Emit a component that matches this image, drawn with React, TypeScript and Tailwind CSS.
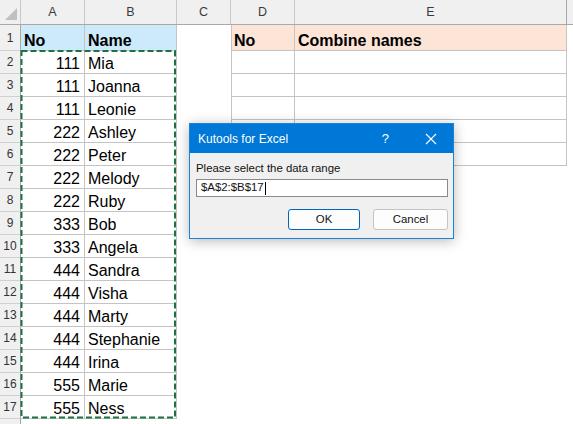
import React from "react";

const names: [number, string][] = [
  [111, "Mia"],
  [111, "Joanna"],
  [111, "Leonie"],
  [222, "Ashley"],
  [222, "Peter"],
  [222, "Melody"],
  [222, "Ruby"],
  [333, "Bob"],
  [333, "Angela"],
  [444, "Sandra"],
  [444, "Visha"],
  [444, "Marty"],
  [444, "Stephanie"],
  [444, "Irina"],
  [555, "Marie"],
  [555, "Ness"],
];

const cellFont = { fontFamily: '"Liberation Sans", Arial, sans-serif' };

function ColHead({ label, w }: { label: string; w: string }) {
  return (
    <div className={`${w} shrink-0 h-full flex items-center justify-center border-r border-[#c8c8c8] text-[12.5px] text-[#3a3a3a]`}>
      {label}
    </div>
  );
}

function RowNum({ n, h }: { n: number; h: string }) {
  return (
    <div className={`w-[21px] shrink-0 ${h} flex items-center justify-center bg-[#f0f0f0] border-r border-b border-r-[#a8a8a8] border-b-[#d0d0d0] text-[12px] text-[#333]`}>
      {n}
    </div>
  );
}

function Dialog() {
  return (
    <div className="absolute left-[189px] top-[123px] w-[265px] h-[116px] bg-[#f0f0f0] border border-[#1883d7] shadow-[0_2px_12px_rgba(0,0,0,0.28)] flex flex-col">
      <div className="h-[29px] bg-[#0078d7] flex items-center text-white pl-[8px] pr-[14px]">
        <span className="text-[12px] flex-1">Kutools for Excel</span>
        <span className="text-[13px] mr-[36px]">?</span>
        <svg width="12" height="12" viewBox="0 0 12 12" className="mr-[2px]">
          <path d="M1 1 L11 11 M11 1 L1 11" stroke="white" strokeWidth="1.1" />
        </svg>
      </div>
      <div className="flex flex-col px-[6px] pt-[8px]">
        <div className="text-[11.4px] text-[#111] leading-[14px]">Please select the data range</div>
        <div className="mt-[4px] h-[18px] w-[252px] bg-white border border-[#8a8a8a] flex items-center pl-[4px] text-[11.4px] text-[#111]">
          $A$2:$B$17
          <span className="inline-block w-px h-[13px] bg-black ml-[1px]" />
        </div>
        <div className="flex justify-end gap-[13px] mt-[12px] -mr-[1px]">
          <div className="w-[72px] h-[21px] rounded-[3px] bg-[#fdfdfd] border border-[#0067c0] flex items-center justify-center text-[11.4px] text-[#111]">
            OK
          </div>
          <div className="w-[75px] h-[21px] rounded-[3px] bg-[#fdfdfd] border border-[#c4c4c4] flex items-center justify-center text-[11.4px] text-[#111]">
            Cancel
          </div>
        </div>
      </div>
    </div>
  );
}

export default function App() {
  return (
    <div className="relative w-[573px] h-[424px] overflow-hidden bg-white" style={cellFont}>
      {/* column headers */}
      <div className="flex h-[25px] bg-[#f0f0f0] border-b border-[#a8a8a8]">
        <div className="w-[21px] shrink-0 h-full border-r border-[#c8c8c8] relative">
          <svg width="20" height="24" className="absolute left-0 top-0">
            <polygon points="5,20 17,20 17,8" fill="#c0c0c0" />
          </svg>
        </div>
        <ColHead label="A" w="w-[64px]" />
        <ColHead label="B" w="w-[92px]" />
        <ColHead label="C" w="w-[54px]" />
        <ColHead label="D" w="w-[64px]" />
        <div className="w-[272px] shrink-0 h-full flex items-center justify-center border-r border-[#a8a8a8] text-[12.5px] text-[#3a3a3a]">
          E
        </div>
        <div className="flex-1" />
      </div>

      {/* row 1 */}
      <div className="flex h-[26px]">
        <RowNum n={1} h="h-[26px]" />
        <div className="w-[64px] shrink-0 bg-[#cdeafb] border-r border-b border-[#c4c4c4] flex items-end pl-[3px] pb-0 text-[16px] font-bold text-black leading-[18px]">
          No
        </div>
        <div className="w-[92px] shrink-0 bg-[#cdeafb] border-r border-b border-[#c4c4c4] flex items-end pl-[3px] pb-0 text-[16px] font-bold text-black leading-[18px]">
          Name
        </div>
        <div className="w-[54px] shrink-0" />
        <div className="w-[64px] shrink-0 bg-[#fce4d6] border-l border-r border-b border-[#c4c4c4] flex items-end pl-[2px] pb-0 text-[16px] font-bold text-black leading-[18px]">
          No
        </div>
        <div className="w-[272px] shrink-0 bg-[#fce4d6] border-r border-b border-[#c4c4c4] flex items-end pl-[3px] pb-0 text-[16px] font-bold text-black leading-[18px]">
          Combine names
        </div>
        <div className="flex-1" />
      </div>

      {/* data rows */}
      {names.map(([no, name], i) => (
        <div key={i} className="flex h-[23px]">
          <RowNum n={i + 2} h="h-[23px]" />
          <div className="w-[64px] shrink-0 border-r border-b border-[#c4c4c4] flex items-end justify-end pr-[4px] pb-0 text-[16px] text-black leading-[18px]">
            {no}
          </div>
          <div className="w-[92px] shrink-0 border-r border-b border-[#c4c4c4] flex items-end pl-[3px] pb-0 text-[16px] text-black leading-[18px]">
            {name}
          </div>
          <div className="w-[54px] shrink-0" />
          {i < 5 ? (
            <>
              <div className="w-[64px] shrink-0 border-l border-r border-b border-[#c4c4c4]" />
              <div className="w-[272px] shrink-0 border-r border-b border-[#c4c4c4]" />
            </>
          ) : (
            <div className="w-[336px] shrink-0" />
          )}
          <div className="flex-1" />
        </div>
      ))}

      {/* partial row 18 */}
      <div className="flex h-[10px]">
        <div className="w-[21px] shrink-0 h-full bg-[#f0f0f0] border-r border-[#a8a8a8]" />
      </div>

      {/* copy marquee around A2:B17 */}
      <svg width="158" height="370" className="absolute left-[20px] top-[50px] pointer-events-none">
        <rect x="1.5" y="1" width="153.5" height="366.5" fill="none" stroke="#1e7145" strokeWidth="2" strokeDasharray="6 3" />
      </svg>

      <Dialog />
    </div>
  );
}
